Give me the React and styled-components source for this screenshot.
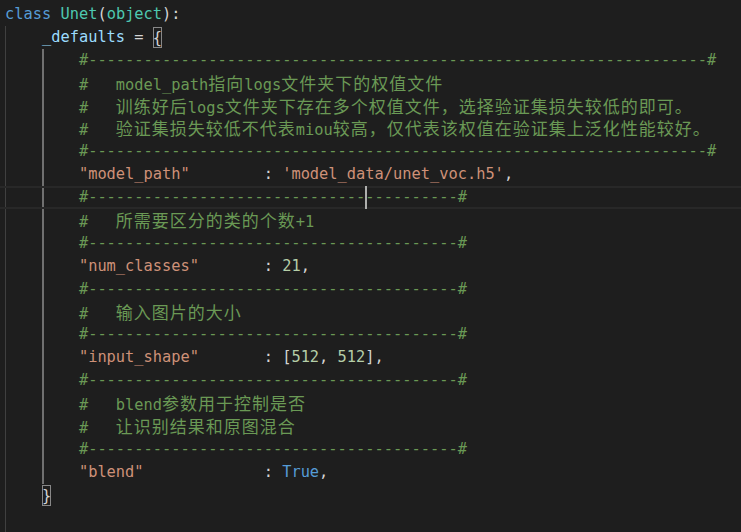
import React from 'react';
import styled, { createGlobalStyle, css } from 'styled-components';

const CH = 9.24;
const LH = 22.9;
const ORIGIN = 5;

const GlobalStyle = createGlobalStyle`
  html, body {
    margin: 0;
    background: #1e1e1e;
  }
`;

const guideAt = (col, color, width) =>
  `linear-gradient(${color}, ${color}) ${Math.round(ORIGIN + col * CH)}px 0 / ${width}px 100% no-repeat`;

const G0 = guideAt(0, '#404040', 1);
const G4 = guideAt(4, '#707070', 2);

const Editor = styled.div`
  display: flex;
  flex-direction: column;
  height: 100vh;
  padding-top: 3px;
  box-sizing: border-box;
  overflow: hidden;
  background: #1e1e1e;
  color: #d4d4d4;
  font-family: 'DejaVu Sans Mono', 'Liberation Mono', 'Noto Sans CJK SC', monospace;
  font-size: 15.35px;
`;

const Line = styled.div`
  flex: none;
  height: ${LH}px;
  line-height: ${LH}px;
  padding-left: ${ORIGIN}px;
  white-space: pre;
  background: ${(p) => (p.$guides.length ? p.$guides.join(', ') : 'none')};
  ${(p) =>
    p.$current &&
    css`
      box-shadow: inset 0 2px #282828, inset 0 -2px #282828;
    `}
`;

const Filler = styled.div`
  flex: 1;
  background: ${G0};
`;

const Keyword = styled.span`color: #569cd6;`;
const TypeName = styled.span`color: #4ec9b0;`;
const Variable = styled.span`color: #9cdcfe;`;
const Str = styled.span`color: #ce9178;`;
const Num = styled.span`color: #b5cea8;`;
const Comment = styled.span`color: #6a9955;`;

const Han = styled.span`
  font-family: 'Noto Sans CJK SC', sans-serif;
  font-size: 17px;
  letter-spacing: 1px;
`;

const Bracket = styled.span`
  display: inline-block;
  width: ${CH}px;
  height: 21px;
  line-height: 21px;
  vertical-align: top;
  margin-top: 1px;
  box-sizing: border-box;
  border: 1px solid #888888;
  text-align: center;
  text-indent: -1px;
`;

const Caret = styled.span`
  display: inline-block;
  width: 2px;
  margin-right: -2px;
  height: ${LH}px;
  vertical-align: top;
  background: #aeafad;
`;

const splitHan = (text) =>
  text.split(/([\u3000-\u303f\u4e00-\u9fff\uff00-\uffef]+)/).map((part, i) =>
    /[\u3000-\u303f\u4e00-\u9fff\uff00-\uffef]/.test(part) ? <Han key={i}>{part}</Han> : part
  );

const IND = '        ';
const dashes = (n) => '#' + '-'.repeat(n) + '#';
const LONG = dashes(67);
const SHORT = dashes(40);

const inner = (toks, current) => ({ guides: [G0, G4], toks, current });
const comment = (text) => inner([['p', IND], ['com', text]]);

const lines = [
  { guides: [], toks: [['kw', 'class'], ['p', ' '], ['cls', 'Unet'], ['p', '('], ['cls', 'object'], ['p', '):']] },
  { guides: [G0], toks: [['p', '    '], ['var', '_defaults'], ['p', ' = '], ['brace', '{']] },
  comment(LONG),
  comment('#   model_path指向logs文件夹下的权值文件'),
  comment('#   训练好后logs文件夹下存在多个权值文件，选择验证集损失较低的即可。'),
  comment('#   验证集损失较低不代表miou较高，仅代表该权值在验证集上泛化性能较好。'),
  comment(LONG),
  inner([['p', IND], ['str', '"model_path"'], ['p', '        : '], ['str', "'model_data/unet_voc.h5'"], ['p', ',']]),
  inner([['p', IND], ['com', '#' + '-'.repeat(30)], ['caret'], ['com', '-'.repeat(10) + '#']], true),
  comment('#   所需要区分的类的个数+1'),
  comment(SHORT),
  inner([['p', IND], ['str', '"num_classes"'], ['p', '       : '], ['num', '21'], ['p', ',']]),
  comment(SHORT),
  comment('#   输入图片的大小'),
  comment(SHORT),
  inner([['p', IND], ['str', '"input_shape"'], ['p', '       : ['], ['num', '512'], ['p', ', '], ['num', '512'], ['p', '],']]),
  comment(SHORT),
  comment('#   blend参数用于控制是否'),
  comment('#   让识别结果和原图混合'),
  comment(SHORT),
  inner([['p', IND], ['str', '"blend"'], ['p', '             : '], ['kw', 'True'], ['p', ',']]),
  { guides: [G0], toks: [['p', '    '], ['brace', '}']] },
];

function Token({ kind, text }) {
  switch (kind) {
    case 'kw':
      return <Keyword>{text}</Keyword>;
    case 'cls':
      return <TypeName>{text}</TypeName>;
    case 'var':
      return <Variable>{text}</Variable>;
    case 'str':
      return <Str>{text}</Str>;
    case 'num':
      return <Num>{text}</Num>;
    case 'com':
      return <Comment>{splitHan(text)}</Comment>;
    case 'brace':
      return <Bracket>{text}</Bracket>;
    case 'caret':
      return <Caret />;
    default:
      return <>{text}</>;
  }
}

export default function App() {
  return (
    <>
      <GlobalStyle />
      <Editor>
        {lines.map((line, i) => (
          <Line key={i} $guides={line.guides} $current={line.current}>
            {line.toks.map(([kind, text], j) => (
              <Token key={j} kind={kind} text={text} />
            ))}
          </Line>
        ))}
        <Filler />
      </Editor>
    </>
  );
}
